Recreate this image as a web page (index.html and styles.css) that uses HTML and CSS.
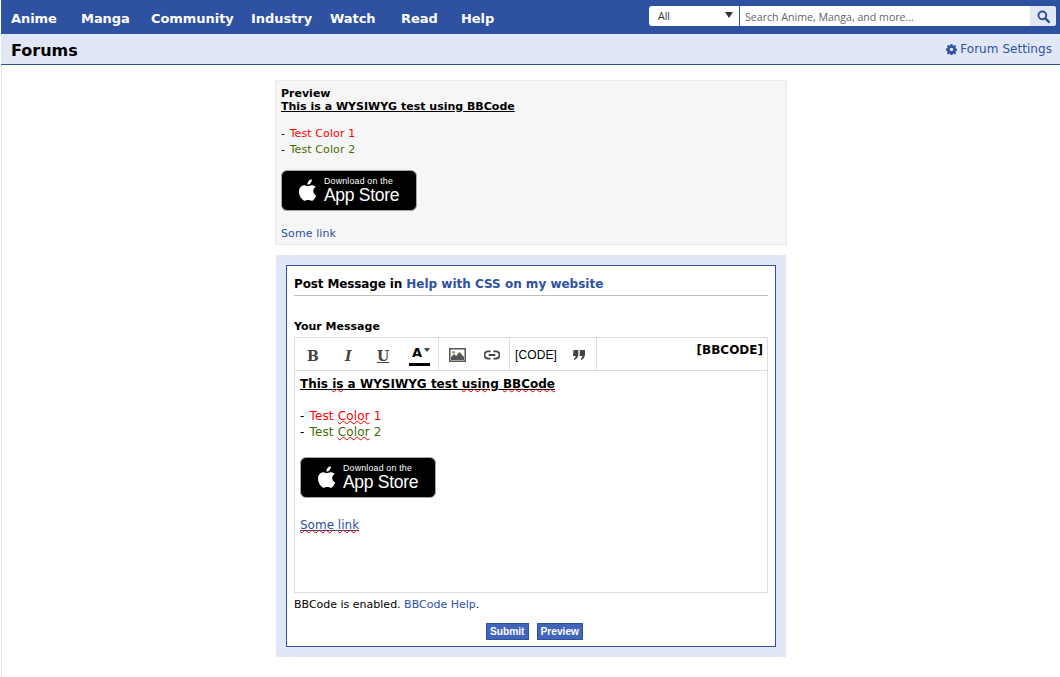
FILE: index.html
```html
<!DOCTYPE html>
<html lang="en">
<head>
<meta charset="utf-8">
<title>Forums</title>
<link rel="stylesheet" href="styles.css">
</head>
<body>
<header class="topbar">
  <nav class="mainnav">
    <a class="n1">Anime</a><a class="n2">Manga</a><a class="n3">Community</a><a class="n4">Industry</a><a class="n5">Watch</a><a class="n6">Read</a><a class="n7">Help</a>
  </nav>
  <div class="search">
    <div class="search-cat"><span>All</span><i class="tri"></i></div>
    <div class="search-input">Search Anime, Manga, and more...</div>
    <div class="search-btn">
      <svg viewBox="0 0 16 16" width="13" height="13"><circle cx="6.6" cy="6.6" r="4.8" fill="none" stroke="#2e51a2" stroke-width="2.4"/><path d="M10.2 10.2l4.4 4.4" stroke="#2e51a2" stroke-width="3" stroke-linecap="round"/></svg>
    </div>
  </div>
</header>
<div class="page">
  <div class="subbar">
    <h1>Forums</h1>
    <a class="settings">
      <svg viewBox="0 0 16 16" width="11" height="11"><path fill="#2e51a2" fill-rule="evenodd" d="M6.6 0h2.800l.4 2.200 1.200.5L12.900 1.400l2 2-1.300 1.900.5 1.200 2.200.4v2.800l-2.200.4-.5 1.200 1.300 1.900-2 2-1.900-1.300-1.200.5-.4 2.200H6.600l-.4-2.200-1.200-.5-1.900 1.300-2-2 1.300-1.900-.5-1.200L-.1 9.400V6.600l2.200-.4.5-1.200L1.300 3.100l2-2 1.900 1.300 1.200-.5zM8 5.400a2.600 2.600 0 1 0 0 5.200 2.600 2.600 0 0 0 0-5.200z"/></svg>
      Forum Settings
    </a>
  </div>
  <main class="content">
    <section class="preview">
      <div class="preview-label">Preview</div>
      <div class="doc-title"><u>This is a WYSIWYG test using BBCode</u></div>
      <div class="gap"></div>
      <div class="line">- <span class="red">Test Color 1</span></div>
      <div class="line">- <span class="olive">Test Color 2</span></div>
      <div class="badge-row">
        <div class="badge">
          <svg class="apple" viewBox="0 0 20 24" width="18" height="22"><path fill="#fff" d="M14.300 0c.2 1.700-.5 3.100-1.300 4.100-.9 1.100-2.300 1.900-3.600 1.800-.2-1.500.5-3 1.300-4C11.600.9 13.100.1 14.300 0zM18.700 8.300c-2.300 1.500-2.900 3.300-2.900 4.900 0 2.300 1.400 4 3.300 4.800-.5 1.600-1.300 3-2.300 4.300-.9 1.200-1.800 1.700-2.900 1.700-1.300 0-1.900-.8-3.700-.8-1.800 0-2.500.8-3.700.8-1.200 0-2.100-.7-3.100-2C1.100 19.900 0 16.900 0 14c0-4.500 2.900-7.300 5.900-7.300 1.600 0 2.900 1 3.800 1 .9 0 2.300-1.100 4.200-1.100 1.800 0 3.500.7 4.800 1.700z"/></svg>
          <div class="badge-text"><span class="b-small">Download on the</span><span class="b-big">App Store</span></div>
        </div>
      </div>
      <a class="link">Some link</a>
    </section>
    <section class="form-wrap">
      <div class="form-box">
        <h2 class="form-title">Post Message in <a>Help with CSS on my website</a></h2>
        <div class="field-label">Your Message</div>
        <div class="editor">
          <div class="toolbar">
            <div class="tgroup g1">
              <span class="tb bold">B</span>
              <span class="tb ital">I</span>
              <span class="tb under">U</span>
              <span class="tb color"><b>A</b><i class="mini-tri"></i><i class="colorbar"></i></span>
            </div>
            <div class="tgroup g2">
              <svg viewBox="0 0 17 14" width="17" height="14"><rect x=".75" y=".75" width="15.500" height="12.500" fill="#fff" stroke="#555" stroke-width="1.500"/><path fill="#555" d="M2 12V9l3-3 2 2 3.500-4L15 9v3z"/><circle cx="4.500" cy="4.200" r="1.300" fill="#b5892f"/></svg>
              <svg viewBox="0 0 17 10" width="16" height="10"><path fill="none" stroke="#444" stroke-width="2" d="M7 1.200H4.300a3.800 3.800 0 0 0 0 7.600H7M10 1.200h2.700a3.800 3.800 0 0 1 0 7.600H10M5 5h7"/></svg>
            </div>
            <div class="tgroup g3">
              <span class="code">[CODE]</span>
              <svg viewBox="0 0 12 10" width="12" height="10"><path fill="#444" d="M.5 0h4.800v4.500C5.300 7 3.800 9 1.700 10L.9 8.700C2 8 2.600 7.200 2.700 6H0zM7 0h5v4.500C12 7 10.500 9 8.400 10L7.600 8.700C8.700 8 9.300 7.200 9.400 6H6.500z"/></svg>
            </div>
            <div class="mode">[BBCODE]</div>
          </div>
          <div class="editor-body">
            <div class="doc-title big"><u>This <s class="sp">is</s> a WYSIWYG test <s class="sp">using</s> <s class="sp">BBCode</s></u></div>
            <div class="gap big"></div>
            <div class="line big">- <span class="red">Test <s class="sp">Color</s> 1</span></div>
            <div class="line big">- <span class="olive">Test <s class="sp">Color</s> 2</span></div>
            <div class="badge-row big">
              <div class="badge">
                <svg class="apple" viewBox="0 0 20 24" width="18" height="22"><path fill="#fff" d="M14.300 0c.2 1.700-.5 3.100-1.300 4.100-.9 1.100-2.300 1.900-3.600 1.800-.2-1.500.5-3 1.300-4C11.600.9 13.100.1 14.300 0zM18.700 8.300c-2.300 1.500-2.900 3.300-2.900 4.900 0 2.300 1.400 4 3.300 4.800-.5 1.600-1.300 3-2.300 4.300-.9 1.200-1.800 1.700-2.900 1.700-1.300 0-1.900-.8-3.700-.8-1.800 0-2.500.8-3.700.8-1.200 0-2.100-.7-3.100-2C1.100 19.900 0 16.900 0 14c0-4.500 2.900-7.300 5.900-7.300 1.600 0 2.900 1 3.800 1 .9 0 2.300-1.100 4.200-1.100 1.800 0 3.500.7 4.800 1.700z"/></svg>
                <div class="badge-text"><span class="b-small">Download on the</span><span class="b-big">App Store</span></div>
              </div>
            </div>
            <a class="link big-link"><s class="sp">Some</s> <s class="sp">link</s></a>
          </div>
        </div>
        <p class="hint">BBCode is enabled. <a>BBCode Help</a>.</p>
        <div class="actions"><button>Submit</button><button>Preview</button></div>
      </div>
    </section>
  </main>
</div>
</body>
</html>
```
FILE: styles.css
```css
* { box-sizing: border-box; }
html, body { margin: 0; padding: 0; }
body { font-family: "DejaVu Sans", Verdana, sans-serif; font-size: 11px; color: #000; background: #fff; height: 677px; overflow: hidden; padding-left: 1px; }
a { color: #2e51a2; text-decoration: none; }
h1, h2, p { margin: 0; }

.topbar { height: 34px; background: #2e51a2; display: flex; justify-content: space-between; align-items: flex-start; }
.mainnav { display: flex; padding-left: 10px; }
.mainnav a { color: #fff; font-weight: bold; font-size: 13px; line-height: 37px; letter-spacing: -.05px; }
.n1 { width: 70px; } .n2 { width: 70px; } .n3 { width: 100px; } .n4 { width: 79px; } .n5 { width: 71px; } .n6 { width: 60px; }

.search { display: flex; height: 20px; margin: 6px 4px 0 0; width: 407px; background: #fff; border-radius: 3px; overflow: hidden; font-family: "Open Sans", sans-serif; font-size: 10.600px; }
.search-cat { width: 91px; border-right: 1px solid #2e51a2; display: flex; align-items: center; justify-content: space-between; padding: 0 6px 0 9px; color: #333; }
.tri { width: 0; height: 0; border-left: 4px solid transparent; border-right: 4px solid transparent; border-top: 6px solid #333; margin-top: -3px; }
.search-input { flex: 1; padding-left: 5px; line-height: 22px; color: #666; }
.search-btn { width: 26px; background: #e1e7f5; display: flex; align-items: center; justify-content: center; }

.page { border-left: 1px solid #e8e8e8; height: 643px; }
.subbar { height: 31px; background: #e1e7f5; border-bottom: 1px solid #2e51a2; margin-left: -1px; display: flex; justify-content: space-between; padding: 0 8px 0 10px; }
.subbar h1 { font-size: 16px; font-weight: bold; line-height: 33px; }
.settings { font-size: 12px; line-height: 29px; display: flex; align-items: center; gap: 3px; letter-spacing: .05px; }

.content { width: 512px; margin: 15px 0 0 273px; }
.preview { height: 165px; background: #f6f6f6; border: 1px solid #ebebeb; padding: 5px; line-height: 16px; }
.preview-label { font-weight: bold; line-height: 13px; margin-top: 1px; }
.doc-title { font-weight: bold; line-height: 13px; }
.gap { height: 13px; }
.line { line-height: 16px; letter-spacing: .1px; }
.red, .olive { margin-left: 1px; }
.red { color: #f00; }
.olive { color: #3f6e00; }
.badge-row { margin-top: 12px; height: 41px; }
.badge { width: 136px; height: 41px; background: #000; border: 1px solid #a6a6a6; border-radius: 6px; display: flex; align-items: center; color: #fff; padding-left: 17px; gap: 7px; font-family: "Liberation Sans", sans-serif; }
.apple { flex: none; margin-top: -2px; }
.badge-text { display: flex; flex-direction: column; margin-top: -2px; }
.b-small { font-size: 8.800px; line-height: 10px; letter-spacing: .2px; }
.b-big { font-size: 17.500px; line-height: 18px; letter-spacing: -.3px; }
.link { display: block; margin-top: 15px; letter-spacing: .1px; }

.form-wrap { margin: 10px 1px 0; height: 402px; background: #e1e7f5; padding: 10px; }
.form-box { height: 382px; background: #fff; border: 1px solid #2e51a2; padding: 0 7px; }
.form-title { font-size: 12px; font-weight: bold; line-height: 15px; height: 30px; padding-top: 11px; border-bottom: 1px solid #bebebe; letter-spacing: -.13px; }
.form-title a { letter-spacing: 0; }
.field-label { font-weight: bold; margin-top: 23px; line-height: 15px; }
.editor { margin-top: 3px; height: 256px; border: 1px solid #dcdcdc; }
.toolbar { height: 33px; border-bottom: 1px solid #dcdcdc; display: flex; align-items: stretch; }
.tgroup { display: flex; align-items: center; border-right: 1px solid #dcdcdc; }
.g1 { width: 144px; padding-left: 12px; }
.g2 { width: 71px; padding: 2px 0 0 10px; gap: 18px; }
.g3 { width: 87px; padding: 2px 0 0 5px; gap: 16px; }
.tb { flex: none; width: 35px; font-family: "DejaVu Serif", serif; font-size: 14px; color: #444; line-height: 16px; font-weight: bold; margin-top: 3px; }
.ital { font-style: italic; padding-left: 3px; }
.under { text-decoration: underline; }
.color { display: flex; position: relative; width: 26px; height: 32px; margin: 0 0 0 -3px; padding-left: 3px; font-family: "DejaVu Sans", sans-serif; color: #000; }
.color b { font-size: 13px; line-height: 30px; }
.mini-tri { width: 0; height: 0; border-left: 3px solid transparent; border-right: 3px solid transparent; border-top: 4px solid #444; margin: 10px 0 0 2px; }
.colorbar { position: absolute; left: 0; bottom: 4px; width: 21px; height: 3px; background: #000; }
.code { font-family: "Liberation Sans", sans-serif; font-size: 12px; color: #000; letter-spacing: .1px; }
.mode { flex: 1; text-align: right; font-weight: bold; font-size: 12px; line-height: 24px; padding-right: 4px; }

.editor-body { padding: 6px 5px 5px; }
.doc-title.big { font-size: 12px; line-height: 15px; }
.gap.big { height: 16px; }
.line.big { font-size: 12px; line-height: 16px; letter-spacing: .15px; }
.badge-row.big { margin-top: 17px; }
.big-link { margin-top: 20px; line-height: 15px; text-decoration: underline; font-size: 12px; letter-spacing: 0; }
.sp { text-decoration: underline wavy #e00000 1px; text-underline-offset: 0; }

.hint { margin-top: 5px; line-height: 14px; }
.actions { display: flex; justify-content: center; gap: 8px; margin-top: 11px; padding-left: 7px; }
.actions button { height: 17px; padding: 0 3px; border: 1px solid #2e51a2; background: #4165ba; color: #fff; font: bold 10.200px "Liberation Sans", sans-serif; line-height: 15px; }
```
